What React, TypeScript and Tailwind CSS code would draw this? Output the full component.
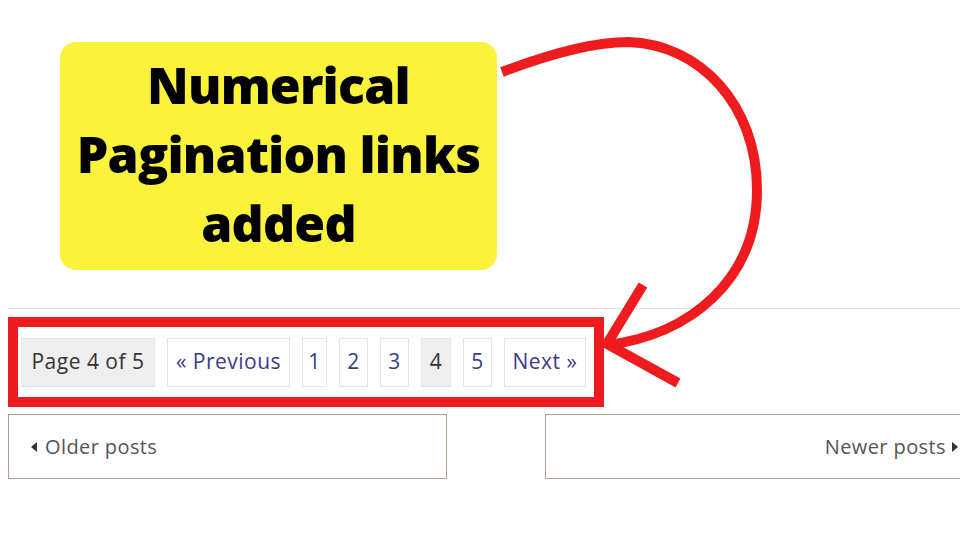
import React from "react";

const bodyFont = { fontFamily: '"Open Sans", "Noto Sans", sans-serif' };

function PageLink({
  label,
  width,
  current = false,
  muted = false,
}: {
  label: string;
  width: string;
  current?: boolean;
  muted?: boolean;
}) {
  return (
    <span
      className={`flex h-[49px] items-center justify-center whitespace-nowrap border border-[#e4e4e4] text-[21px] tracking-[0.5px] ${width} ${
        current || muted ? "bg-[#efefef] text-[#333333]" : "bg-white text-[#3b3a8a]"
      }`}
    >
      {label}
    </span>
  );
}

export default function App() {
  return (
    <div className="relative h-[540px] w-[960px] overflow-hidden bg-white" style={bodyFont}>
      <div className="flex flex-col">
        {/* callout */}
        <div className="ml-[60px] mt-[42px] flex h-[228px] w-[437px] flex-col items-center justify-center rounded-[16px] bg-[#fbf33b] pb-[4px]">
          <p
            className="whitespace-nowrap text-center text-[50px] font-extrabold leading-[69px] tracking-[-0.8px] text-black"
            style={{ fontFamily: '"Open Sans", sans-serif' }}
          >
            Numerical
            <br />
            Pagination links
            <br />
            added
          </p>
        </div>

        {/* divider */}
        <div className="ml-[8px] mt-[38px] h-px bg-[#dfe2ea]" />

        {/* pagination */}
        <nav className="ml-[8px] mt-[8px] flex h-[90px] w-[596px] items-center gap-[12px] border-[10px] border-[#ee1c1f] pl-[3px]">
          <PageLink label="Page 4 of 5" width="w-[134px]" muted />
          <PageLink label="« Previous" width="w-[123px]" />
          <PageLink label="1" width="w-[25px]" />
          <PageLink label="2" width="w-[29px]" />
          <PageLink label="3" width="w-[29px]" />
          <PageLink label="4" width="w-[30px]" current />
          <PageLink label="5" width="w-[29px]" />
          <PageLink label="Next »" width="w-[82px]" />
        </nav>

        {/* older / newer */}
        <div className="ml-[8px] mt-[7px] flex gap-[98px]">
          <div className="flex h-[65px] w-[439px] shrink-0 items-center border border-[#b89a94] pl-[22px] text-[20px] tracking-[0.4px] text-[#555555]">
            <svg width="7" height="10" viewBox="0 0 7 10" className="mr-[7px]">
              <path d="M6 0 L0 5 L6 10 Z" fill="#333" />
            </svg>
            Older posts
          </div>
          <div className="flex h-[65px] w-[440px] shrink-0 items-center justify-end border border-[#b89a94] pr-[25px] text-[20px] tracking-[0.4px] text-[#555555]">
            Newer posts
            <svg width="7" height="10" viewBox="0 0 7 10" className="ml-[6px]">
              <path d="M0 0 L6 5 L0 10 Z" fill="#333" />
            </svg>
          </div>
        </div>
      </div>

      {/* curved arrow pointing at the pagination */}
      <svg
        className="pointer-events-none absolute left-0 top-0"
        width="960"
        height="540"
        viewBox="0 0 960 540"
      >
        <path
          d="M502 72 C 560 50 600 42 628 42 C 700 44 757 105 757 190 C 757 280 690 335 607 345"
          fill="none"
          stroke="#ee1c1f"
          strokeWidth="10"
        />
        <path d="M643 285 L607 344 L678 383" fill="none" stroke="#ee1c1f" strokeWidth="10" />
      </svg>
    </div>
  );
}
